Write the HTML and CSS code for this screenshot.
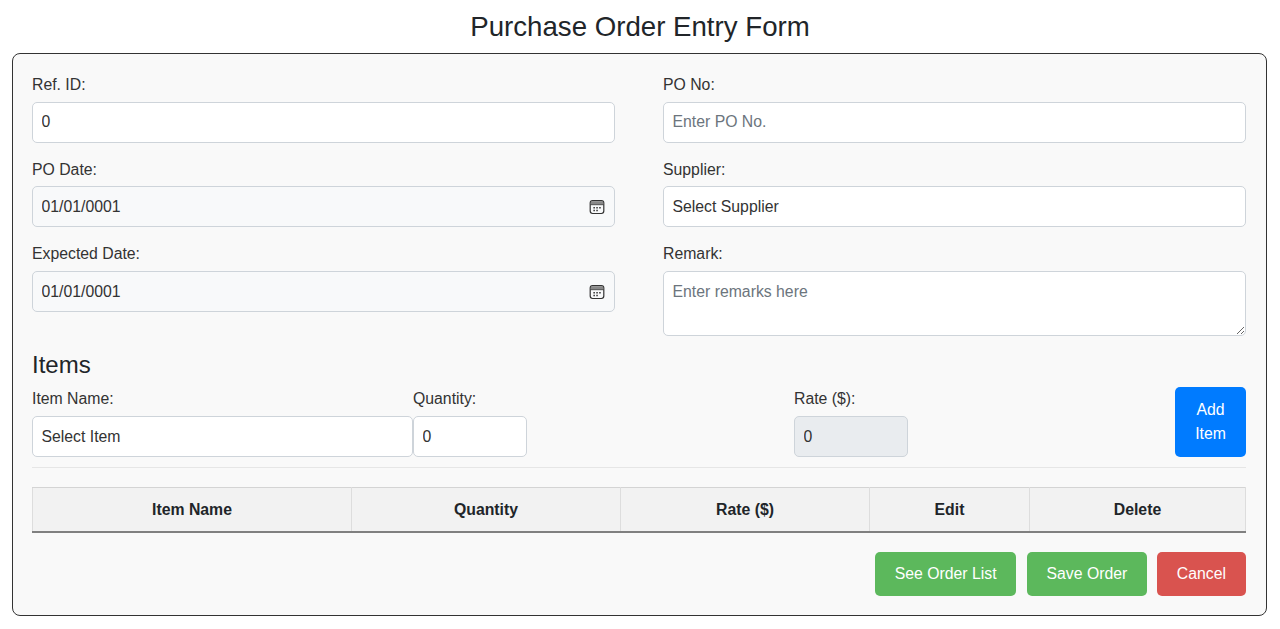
FILE: index.html
```html
<!DOCTYPE html>
<html lang="en">
<head>
<meta charset="utf-8">
<title>Purchase Order Entry Form</title>
<link rel="stylesheet" href="styles.css">
</head>
<body>
<h1 class="title">Purchase Order Entry Form</h1>
<form class="card">
  <div class="top-grid">
    <div class="field row-one"><label>Ref. ID:</label><input class="control" type="text" value="0"></div>
    <div class="field row-one"><label>PO No:</label><input class="control" type="text" placeholder="Enter PO No."></div>
    <div class="field row-two"><label>PO Date:</label>
      <div class="date-wrap"><input class="control date" type="text" value="01/01/0001">
        <svg class="cal" viewBox="0 0 16 16" width="16" height="16" aria-hidden="true"><rect x="1.2" y="1.7" width="13.6" height="12.8" rx="2.4" fill="none" stroke="#333" stroke-width="1.2"/><path d="M1.5 5.6h13" stroke="#333" stroke-width="1.1"/><path d="M1.8 3.2q0-1 1-1h10.4q1 0 1 1v2.4H1.8z" fill="#888"/><path d="M4.4 8h1.5v1.5H4.4zM7.3 8h1.5v1.5H7.3zM10.2 8h1.5v1.5h-1.5zM4.4 10.8h1.5v1.5H4.4zM7.3 10.8h1.5v1.5H7.3z" fill="#333"/></svg>
      </div></div>
    <div class="field row-two"><label>Supplier:</label><input class="control" type="text" value="Select Supplier"></div>
    <div class="field row-three"><label>Expected Date:</label>
      <div class="date-wrap"><input class="control date" type="text" value="01/01/0001">
        <svg class="cal" viewBox="0 0 16 16" width="16" height="16" aria-hidden="true"><rect x="1.2" y="1.7" width="13.6" height="12.8" rx="2.4" fill="none" stroke="#333" stroke-width="1.2"/><path d="M1.5 5.6h13" stroke="#333" stroke-width="1.1"/><path d="M1.8 3.2q0-1 1-1h10.4q1 0 1 1v2.4H1.8z" fill="#888"/><path d="M4.4 8h1.5v1.5H4.4zM7.3 8h1.5v1.5H7.3zM10.2 8h1.5v1.5h-1.5zM4.4 10.8h1.5v1.5H4.4zM7.3 10.8h1.5v1.5H7.3z" fill="#333"/></svg>
      </div></div>
    <div class="field row-three"><label>Remark:</label><textarea class="control area" placeholder="Enter remarks here"></textarea></div>
  </div>
  <h2 class="items-title">Items</h2>
  <div class="items-row">
    <div class="item-col"><label>Item Name:</label><input class="control" type="text" value="Select Item"></div>
    <div class="item-col"><label>Quantity:</label><input class="control small" type="text" value="0"></div>
    <div class="item-col"><label>Rate ($):</label><input class="control small readonly" type="text" value="0" readonly></div>
    <button class="btn btn-blue add" type="button">Add Item</button>
  </div>
  <hr class="rule">
  <table class="grid">
    <thead>
      <tr><th class="c1">Item Name</th><th class="c2">Quantity</th><th class="c3">Rate ($)</th><th class="c4">Edit</th><th class="c5">Delete</th></tr>
    </thead>
  </table>
  <div class="actions">
    <button class="btn btn-green btn-list" type="button">See Order List</button>
    <button class="btn btn-green" type="button">Save Order</button>
    <button class="btn btn-red" type="button">Cancel</button>
  </div>
</form>
</body>
</html>
```
FILE: styles.css
```css
* { box-sizing: border-box; }
html, body { margin: 0; padding: 0; }
body {
  background: #fff;
  color: #212529;
  font-family: "Liberation Sans", Arial, sans-serif;
  font-size: 15.8px;
  line-height: 24px;
  height: 629px;
  overflow: hidden;
}
.title {
  margin: 0;
  height: 53px;
  padding-top: 8px;
  font-size: 27.65px;
  line-height: 38px;
  font-weight: 400;
  text-align: center;
}
.card {
  width: 1255px;
  height: 563px;
  margin-left: 12px;
  padding: 19px 20px 0 19px;
  background: #f9f9f9;
  border: 1px solid #333;
  border-radius: 8px;
}
.top-grid {
  display: grid;
  grid-template-columns: 583px 583px;
  column-gap: 48px;
}
.field { height: 84.5px; }
.row-two label { margin-bottom: 4px; }
.row-three { height: 100px; }
label { display: block; height: 24px; margin-bottom: 5px; color: #333; }
.control {
  display: block;
  width: 100%;
  height: 41px;
  padding: 8px 9px 8px 8.5px;
  font-family: inherit;
  font-size: 15.8px;
  line-height: 24px;
  color: #333;
  background: #fff;
  border: 1px solid #ced4da;
  border-radius: 5px;
  outline: none;
}
.row-one .control { padding-top: 7px; padding-bottom: 9px; }
.row-two .control { padding-top: 9px; padding-bottom: 7px; }
.control::placeholder { color: #6c757d; opacity: 1; }
.date { background: #f8f9fa; padding-right: 36px; }
.date-wrap { position: relative; }
.cal { position: absolute; right: 10px; top: 13px; }
.area { height: 65px; resize: vertical; }
.items-title {
  margin: 8px 0 0;
  font-size: 24px;
  line-height: 29px;
  font-weight: 400;
}
.items-row {
  display: flex;
  margin-top: 8px;
}
.item-col { width: 381px; }
.small { width: 114px; }
.readonly { background: #e9ecef; }
.btn {
  border: 0;
  border-radius: 5px;
  color: #fff;
  font-family: inherit;
  font-size: 15.8px;
  line-height: 24px;
  padding: 10px 20px;
}
.add { width: 71px; height: 70px; padding: 10px 14px; }
.btn-blue { background: #007bff; }
.btn-green { background: #5cb85c; padding: 10px 19.5px; }
.btn-red { background: #d9534f; }
.btn-list { margin-right: 1px; }
.rule {
  margin: 10px 0 19px;
  border: 0;
  border-top: 1px solid #e6e6e6;
}
.grid {
  width: 1213px;
  border-collapse: collapse;
  table-layout: fixed;
}
.grid th {
  height: 44px;
  padding: 1px 0 0;
  background: #f2f2f2;
  border: 1px solid #ddd;
  border-top-color: #d4d4d4;
  border-bottom: 2px solid #808080;
  font-size: 15.8px;
  font-weight: 700;
  text-align: center;
}
.c1 { width: 319px; }
.c2 { width: 269px; }
.c3 { width: 249px; }
.c4 { width: 160px; }
.c5 { width: 216px; }
.actions {
  display: flex;
  justify-content: flex-end;
  gap: 10px;
  margin-top: 19px;
}
.actions .btn { height: 44px; }
```
